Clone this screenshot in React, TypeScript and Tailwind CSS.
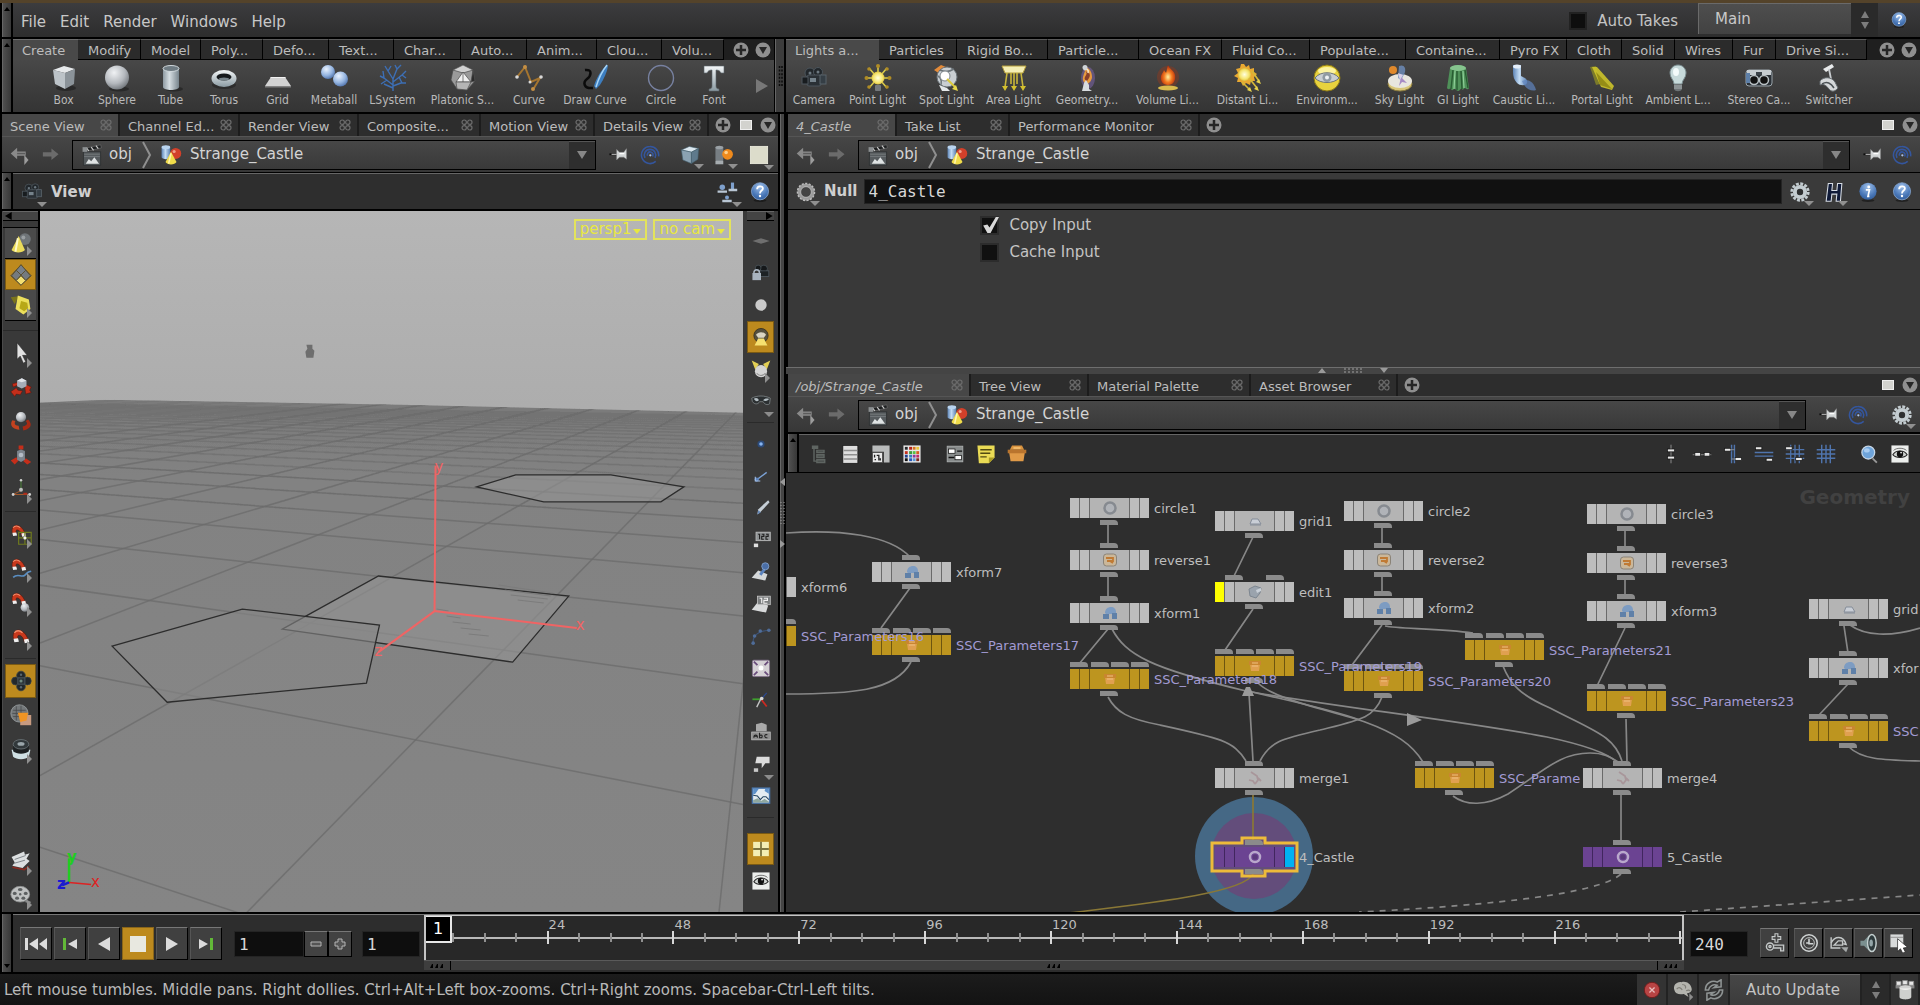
import React from "react";

/* ------------------------------------------------------------------ */
/* Shared gradients                                                    */
/* ------------------------------------------------------------------ */

function Defs() {
  return (
    <svg width="0" height="0" className="absolute" aria-hidden="true">
      <defs>
        <radialGradient id="gBall" cx="0.38" cy="0.3" r="0.75">
          <stop offset="0" stopColor="#f0f2f4" />
          <stop offset="0.6" stopColor="#b4b8bd" />
          <stop offset="1" stopColor="#6e7378" />
        </radialGradient>
        <radialGradient id="gBlueBall" cx="0.38" cy="0.3" r="0.75">
          <stop offset="0" stopColor="#eaf3ff" />
          <stop offset="0.6" stopColor="#94b4e0" />
          <stop offset="1" stopColor="#4c6fa8" />
        </radialGradient>
        <radialGradient id="gHelp" cx="0.5" cy="0.25" r="0.85">
          <stop offset="0" stopColor="#9fc0ea" />
          <stop offset="0.6" stopColor="#4a78b8" />
          <stop offset="1" stopColor="#2b5592" />
        </radialGradient>
        <radialGradient id="gSun" cx="0.5" cy="0.5" r="0.6">
          <stop offset="0" stopColor="#ffffe0" />
          <stop offset="0.6" stopColor="#f5e46c" />
          <stop offset="1" stopColor="#c9a520" />
        </radialGradient>
        <linearGradient id="gTube" x1="0" x2="1">
          <stop offset="0" stopColor="#8e9aa2" />
          <stop offset="0.4" stopColor="#d6dee2" />
          <stop offset="1" stopColor="#78858d" />
        </linearGradient>
        <linearGradient id="gBlueTube" x1="0" x2="1">
          <stop offset="0" stopColor="#5f86b8" />
          <stop offset="0.45" stopColor="#c3dcf4" />
          <stop offset="1" stopColor="#5b80b0" />
        </linearGradient>
        <linearGradient id="gSteel" x1="0" y1="0" x2="0" y2="1">
          <stop offset="0" stopColor="#f4f7f8" />
          <stop offset="1" stopColor="#8a9aa2" />
        </linearGradient>
        <radialGradient id="gFire" cx="0.5" cy="0.6" r="0.6">
          <stop offset="0" stopColor="#fff0a0" />
          <stop offset="0.45" stopColor="#f47a20" />
          <stop offset="1" stopColor="#a82008" />
        </radialGradient>
        <linearGradient id="gSky" x1="0" y1="0" x2="0" y2="1">
          <stop offset="0" stopColor="#b6b6b6" />
          <stop offset="0.28" stopColor="#adadad" />
          <stop offset="1" stopColor="#adadad" />
        </linearGradient>
        <linearGradient id="gGround" x1="0" y1="0" x2="0" y2="1">
          <stop offset="0" stopColor="#7c7c7c" />
          <stop offset="0.15" stopColor="#828282" />
          <stop offset="1" stopColor="#858585" />
        </linearGradient>
      </defs>
    </svg>
  );
}

/* ------------------------------------------------------------------ */
/* Icons, each drawn on a 28 x 28 grid                                 */
/* ------------------------------------------------------------------ */

const magnet = (
  <g>
    <path d="M3 13C1 5 7 1 12 4c4 2 6 6 8 11l-5 1c-1-4-3-7-5-7-2-1-3 1-2 4z" fill="#c9391d" stroke="#5b140a" strokeWidth="0.7" />
    <path d="M4 6c2-3 6-3 9 0" fill="none" stroke="#f08a68" strokeWidth="1.4" />
    <path d="M3 12.500l5-0.500 1 4-5 0.500zM14.500 13.500l5-1 1 4-5 1z" fill="#efefef" />
  </g>
);

const cameraShape = (
  <g>
    <circle cx="10" cy="9" r="5" fill="#22272b" stroke="#4c555c" />
    <circle cx="18" cy="8" r="4.500" fill="#22272b" stroke="#4c555c" />
    <rect x="7" y="11" width="14" height="11" rx="2" fill="#2a3035" stroke="#4c555c" />
    <rect x="2" y="13" width="6" height="7" fill="#181c1f" stroke="#4c555c" />
    <rect x="20" y="11" width="6" height="9" fill="#353e45" stroke="#59636b" />
    <path d="M10 14h6v4h-6z" fill="#76838c" />
    <circle cx="10" cy="9" r="1.500" fill="#6c7880" />
    <circle cx="18" cy="8" r="1.500" fill="#6c7880" />
  </g>
);

const fourWay = (
  <g fill="#c42e1a" stroke="#5a120a" strokeWidth="0.6">
    <path d="M1 20l7-5 2 3 6 1-3 5-5-1-2 3z" />
    <path d="M27 14l-6-3-2 4 1 8 7-2-2-3z" />
    <path d="M3 10l8-2-2 4-5 2z" />
  </g>
);

const ICONS: Record<string, React.ReactNode> = {
  box: (
    <g>
      <ellipse cx="16" cy="24" rx="10" ry="3" fill="#1c1c1c" opacity="0.6" />
      <path d="M3 6l11-4 11 3-10 4z" fill="#e6e9eb" />
      <path d="M3 6l12 3v16L5 20z" fill="#bcc3c8" />
      <path d="M15 9l10-4-1 15-9 5z" fill="#8b9399" />
    </g>
  ),
  sphere: (
    <g>
      <ellipse cx="16" cy="25" rx="10" ry="2.500" fill="#1c1c1c" opacity="0.6" />
      <circle cx="14" cy="13.500" r="12" fill="url(#gBall)" />
    </g>
  ),
  tube: (
    <g>
      <ellipse cx="17" cy="25" rx="9" ry="2.500" fill="#1c1c1c" opacity="0.6" />
      <path d="M6 4v19c0 4 16 4 16 0V4z" fill="url(#gTube)" />
      <ellipse cx="14" cy="4.500" rx="8" ry="3" fill="#6f7b82" stroke="#d0d8dc" />
    </g>
  ),
  torus: (
    <g>
      <ellipse cx="14" cy="21" rx="12" ry="4" fill="#1c1c1c" opacity="0.5" />
      <ellipse cx="14" cy="14.500" rx="12.500" ry="8.500" fill="url(#gSteel)" />
      <ellipse cx="14" cy="13" rx="7.500" ry="3.500" fill="#15191c" />
      <ellipse cx="14" cy="15" rx="5" ry="1.500" fill="#76838a" />
    </g>
  ),
  grid: (
    <g>
      <path d="M7 13h14l6 9H1z" fill="#d2d2d2" />
      <path d="M1 22h26v1.500H1z" fill="#818181" />
      <path d="M7 13h14l1 1H6z" fill="#f2f2f2" />
    </g>
  ),
  metaball: (
    <g>
      <circle cx="8" cy="8" r="7" fill="url(#gBlueBall)" />
      <circle cx="20.500" cy="15" r="7.500" fill="url(#gBlueBall)" />
    </g>
  ),
  lsystem: (
    <g fill="none" stroke="#3d6fb5" strokeWidth="1.400">
      <path d="M14 27V15M14 21L5 14M14 18l9-7M14 15l-5-8M14 15l4-10M5 14L1 12M5 14L4 7M9 7L6 2M9 7l3-5M18 5l-2-4M18 5l4-4M23 11l4-4M23 11l4 3M14 22l8-3M22 19l5 0M14 24l-9-4M20 13l3 6M8 16l-6 4" />
    </g>
  ),
  platonic: (
    <g stroke="#4a4a4a" strokeWidth="0.7">
      <path d="M14 1l10 5 2 11-8 9-10-1-6-9 2-10z" fill="#9a9a9a" />
      <path d="M14 1l10 5-10 3-10-3z" fill="#d0d0d0" />
      <path d="M14 8l8 10-15 0z" fill="#efefef" />
      <path d="M7 18h15l-4 8-10-1z" fill="#b5b5b5" />
      <path d="M22 18l2-12 2 11z" fill="#2b2b2b" />
      <path d="M14 8l0 10" />
    </g>
  ),
  curve: (
    <g>
      <path d="M2 13L10 3l6 15 9-4-6 10" fill="none" stroke="#a5752f" strokeWidth="2" />
      <g fill="#d8d8d8">
        <circle cx="2" cy="13" r="1.800" />
        <circle cx="26" cy="13" r="1.800" />
        <circle cx="15" cy="18" r="1.500" />
      </g>
      <circle cx="10" cy="3" r="2" fill="#c48f45" />
      <circle cx="18" cy="25" r="2" fill="#c48f45" />
    </g>
  ),
  drawcurve: (
    <g>
      <path d="M4 6c8-1 6 6 2 9s-4 10 6 9" fill="none" stroke="#0b0b0b" strokeWidth="2.500" />
      <path d="M26 1c-5 4-11 13-13 21l2 3 4-4c4-6 7-13 8-19z" fill="#3d7ec0" />
      <path d="M26 1c-4 5-8 12-11 22" fill="none" stroke="#a8d4f4" strokeWidth="1.500" />
    </g>
  ),
  circle: <circle cx="14" cy="14" r="12.500" fill="none" stroke="#7781a0" strokeWidth="1.400" />,
  font: (
    <g fill="url(#gSteel)" stroke="#5c666c" strokeWidth="0.6">
      <path d="M4 2h20v7h-3c-1-2-2-3-5-3v16c0 2 1 3 3 3v2H9v-2c2 0 3-1 3-3V6C9 6 8 7 7 9H4z" />
    </g>
  ),
  camera: cameraShape,
  pointlight: (
    <g>
      <g stroke="#d8c94a" strokeWidth="1.600">
        <path d="M14 1v8M14 14L2 14M14 14h12M5 4l6 7M23 4l-6 7M5 24l6-7M23 24l-6-7" />
      </g>
      <g fill="#b08c25">
        <circle cx="14" cy="2" r="2" />
        <circle cx="2.500" cy="14" r="2" />
        <circle cx="25.500" cy="14" r="2" />
        <circle cx="5" cy="5" r="1.800" />
        <circle cx="23" cy="5" r="1.800" />
        <circle cx="5" cy="23" r="1.800" />
        <circle cx="23" cy="23" r="1.800" />
      </g>
      <circle cx="14" cy="14" r="6.500" fill="url(#gSun)" />
      <rect x="11" y="21" width="6" height="6" rx="1" fill="#75797c" />
    </g>
  ),
  spotlight: (
    <g>
      <path d="M1 6l7-5 5 2-6 7z" fill="#e38b3a" />
      <circle cx="14" cy="13" r="10" fill="#c9ced2" stroke="#6c7479" />
      <path d="M7 6c4 2 9 2 14-1M5 12c4 2 4 8 2 10" stroke="#6c7479" fill="none" strokeWidth="1.500" />
      <circle cx="12" cy="12" r="5" fill="#fff" stroke="#7e868b" />
      <path d="M6 21l8 3 3 3H9z" fill="#e4e8ea" />
      <path d="M14 15l9 9" stroke="#d9c83c" strokeWidth="2" />
      <path d="M25 27l-6-2 4-4z" fill="#e7d84c" />
    </g>
  ),
  arealight: (
    <g>
      <path d="M2 2h24l-3 7H5z" fill="#f5efb5" stroke="#b59e3a" />
      <g stroke="#c7b53a" strokeWidth="1.600">
        <path d="M7 9L5 23M14 9v15M21 9l2 14M11 9v11M17 9v11" />
      </g>
      <path d="M2 22l6 0-3 5zM11 22h6l-3 5zM20 22h6l-3 5z" fill="#d4c02e" />
    </g>
  ),
  geolight: (
    <g>
      <ellipse cx="15" cy="14" rx="7" ry="11" fill="#8c6cc0" opacity="0.45" />
      <path d="M13 3c5 2 6 7 6 10s-3 7-5 7-5-3-4-7 2-5 3-10z" fill="#e79a3e" />
      <path d="M12 7c3 2 1 4 0 6s0 3 2 4c2-3 4-5 2-8z" fill="#8a3f2a" />
      <path d="M11 6c3-2 5 0 4 3" stroke="#f4e7cf" strokeWidth="1.500" fill="none" />
      <path d="M9 27l2-8 2-3 3 5v4l3 2z" fill="#d8dcdf" />
      <circle cx="12" cy="3.500" r="2.500" fill="#cfd4d8" />
    </g>
  ),
  volumelight: (
    <g>
      <ellipse cx="14" cy="13" rx="11" ry="11" fill="#8b3a20" opacity="0.5" />
      <ellipse cx="14" cy="24" rx="10" ry="2.500" fill="#d9bb4e" />
      <path d="M14 1c1 4 6 5 7 10 1 6-2 10-7 10s-8-4-7-9c1-3 2-3 3-6 1 2 2 2 2 3 1-3 1-5 2-8z" fill="url(#gFire)" />
    </g>
  ),
  distantlight: (
    <g>
      <path d="M10 0l2 3 3-2 1 4 4-1 0 4 3 2-3 3 1 4-4 0-1 4-4-2-3 3-2-4-4 0 1-4-4-2 4-3-2-4 4-1 1-4z" fill="#e9a932" />
      <circle cx="10.500" cy="10.500" r="6.500" fill="url(#gSun)" />
      <path d="M18 7l7 10M15 14l8 10M8 18l8 8" stroke="#d5b93a" strokeWidth="1.700" />
      <path d="M27 20l-5-2 3-3zM25 27l-5-2 3-3zM18 28l-5-2 3-3z" fill="#e6d24c" />
    </g>
  ),
  envlight: (
    <g>
      <circle cx="14" cy="14" r="13" fill="#e8d23e" stroke="#8a7716" />
      <ellipse cx="14" cy="7" rx="9" ry="4" fill="#fbf3a0" />
      <path d="M2 14c5-7 19-7 24 0-5 6-19 6-24 0z" fill="#c9ced2" stroke="#6c7378" />
      <circle cx="14" cy="13.500" r="4.500" fill="#8f9aa2" />
      <circle cx="14" cy="13.500" r="2" fill="#eef2f4" />
    </g>
  ),
  skylight: (
    <g>
      <ellipse cx="14" cy="20" rx="12" ry="7" fill="#d9c77a" stroke="#8a7a3c" />
      <ellipse cx="14" cy="17" rx="12" ry="7" fill="#e8e6df" />
      <path d="M13 2c5-2 7 2 6 6s-3 4-3 9l-4-3z" fill="#6f8fbd" opacity="0.8" />
      <circle cx="7" cy="6" r="4" fill="#e0892c" />
      <path d="M15 13l6 6-5-1-3 4z" fill="#a78bc4" />
      <path d="M12 9l5 2-3 5z" fill="#d8d0ea" />
    </g>
  ),
  gilight: (
    <g>
      <path d="M6 4c4-4 12-4 16 0l3 20c-2 3-3 0-4 0s-2 3-3 1-2 2-4 2-3-3-4-2-2 2-3 0-2 2-4-1z" fill="#4f9159" />
      <ellipse cx="14" cy="4" rx="8" ry="3" fill="#86c48e" />
      <path d="M9 6L7 25M13 7v19M17 7l1 18M21 6l3 18" stroke="#285c32" strokeWidth="1.400" />
      <path d="M11 7l-1 18M19 7l1 17" stroke="#8fd099" strokeWidth="1.200" />
    </g>
  ),
  causticlight: (
    <g>
      <path d="M3 1h8v11c4 2 7 3 6 7-1 3-7 3-10 0S3 12 3 8z" fill="url(#gBlueTube)" />
      <path d="M12 17c7-3 12 2 14 9-4 2-11-1-14-9z" fill="#5f84bf" opacity="0.7" />
      <ellipse cx="7" cy="2.500" rx="4" ry="2" fill="#e6effa" />
    </g>
  ),
  portallight: (
    <g>
      <path d="M2 3l6-1 4 18-4 1z" fill="#7b7a2a" />
      <path d="M4 3l5 0 17 19-2 4-11-3z" fill="#cdc42a" opacity="0.9" />
      <path d="M8 8l4 13 12 4z" fill="#958d16" />
    </g>
  ),
  ambientlight: (
    <g>
      <path d="M14 1c5 0 8 4 8 8 0 5-4 7-4 11h-8c0-4-4-6-4-11 0-4 3-8 8-8z" fill="#c6d9da" stroke="#7c8f92" />
      <ellipse cx="12" cy="8" rx="3" ry="4" fill="#f3fbfb" />
      <path d="M10 20h8v5c-1 3-7 3-8 0z" fill="#6e7477" />
      <path d="M10 22h8M10 24h8" stroke="#a9b0b3" />
    </g>
  ),
  stereocamera: (
    <g>
      <rect x="1" y="6" width="26" height="16" rx="3" fill="#2a3036" stroke="#9aa4aa" />
      <rect x="2" y="6" width="24" height="5" fill="#c6ccd0" />
      <circle cx="9" cy="16" r="4.500" fill="#111" stroke="#b8c0c4" strokeWidth="1.500" />
      <circle cx="19" cy="16" r="4.500" fill="#111" stroke="#b8c0c4" strokeWidth="1.500" />
      <path d="M1 9h4v10H1z" fill="#5d7fa8" />
      <rect x="11" y="8" width="6" height="3" fill="#3b4248" />
    </g>
  ),
  switcher: (
    <g>
      <path d="M8 5l9-5 2 3-8 5z" fill="#e8eaeb" />
      <path d="M14 5l2 10" stroke="#c8cccf" strokeWidth="1.800" />
      <path d="M5 17c4-5 12-4 15 1l3 6c-3 4-7 4-9 1-4-5-6-5-9-4z" fill="#d5d8da" stroke="#62686c" />
      <path d="M7 20c5-3 9-1 12 4" stroke="#4c5256" fill="none" strokeWidth="1.500" />
    </g>
  ),
  arrowleft: (
    <g>
      <path d="M1 12l9-8v5h12v6H10v5z" fill="#8a8a8a" />
      <path d="M10 11h11v2H10z" fill="#5c5c5c" />
      <path d="M20 14l6 7-6 7z" fill="#9c9c9c" />
    </g>
  ),
  arrowright: <path d="M26 13l-10-8v5H4v6h12v5z" fill="#6b6b6b" />,
  clapper: (
    <g>
      <path d="M3 6l22-5 1 4L4 10z" fill="#1d1f20" stroke="#777" strokeWidth="0.7" />
      <path d="M7 5l3 4M13 4l3 4M19 2l3 4" stroke="#c8c8c8" strokeWidth="1.500" />
      <rect x="3" y="10" width="22" height="17" fill="#565b5e" stroke="#2c2f31" />
      <path d="M4 13h20M4 16h20" stroke="#85898b" strokeWidth="0.8" />
      <path d="M6 25l4-6 3 3 4-5 6 8z" fill="#dfe3e4" />
      <rect x="2" y="4" width="6" height="6" fill="#8b8f91" />
    </g>
  ),
  geo: (
    <g>
      <path d="M2 4v13c0 3 11 3 11 0V4z" fill="url(#gBlueTube)" />
      <ellipse cx="7.500" cy="4" rx="5.500" ry="2.500" fill="#b9d4ef" />
      <circle cx="20" cy="12" r="7" fill="#d2402a" />
      <circle cx="18" cy="9.500" r="2" fill="#f0a08c" />
      <path d="M14 10l7 13c-2 4-12 4-14 0z" fill="#f0dc4a" />
      <path d="M14 12l-3 13" stroke="#fff6b0" strokeWidth="2" />
    </g>
  ),
  pin: (
    <g>
      <path d="M2 13h10" stroke="#0c0c0c" strokeWidth="2.500" />
      <path d="M5 13h8" stroke="#e0e0e0" strokeWidth="1.300" />
      <path d="M12 6l4 4h6l4-5v15l-4-3h-6l-4 4z" fill="#d3d6d7" stroke="#777" strokeWidth="0.6" />
      <path d="M16 11h7v2h-7z" fill="#fff" />
    </g>
  ),
  target: (
    <g fill="none" stroke="#34569e" strokeWidth="2.200">
      <path d="M14 2a12 12 0 1 0 8 21M14 2a12 12 0 0 1 12 14" />
      <path d="M7 18A8 8 0 1 1 21 18" />
      <path d="M10.500 15a4 4 0 1 1 7 1" />
      <circle cx="14.500" cy="14.500" r="1.600" fill="#a9c0ea" stroke="none" />
    </g>
  ),
  glasscube: (
    <g stroke="#45606f" strokeWidth="0.8">
      <path d="M2 7l11-5 13 3-10 5z" fill="#dbe7ef" />
      <path d="M2 7l14 3v16L4 21z" fill="#8ba2b2" />
      <path d="M16 10l10-5-1 15-9 6z" fill="#5f7a8c" />
    </g>
  ),
  cylball: (
    <g>
      <path d="M2 3v18c0 3 11 3 11 0V3z" fill="#777e83" />
      <ellipse cx="7.500" cy="3.500" rx="5.500" ry="2.500" fill="#9aa1a6" />
      <path d="M2 22h11v5H2z" fill="#a6acb0" />
      <circle cx="19" cy="13" r="7.500" fill="#ef8a1c" />
      <circle cx="17" cy="10.500" r="2.500" fill="#ffd08a" />
    </g>
  ),
  whitesquare: <rect x="3" y="3" width="22" height="22" fill="#dcdccb" stroke="#f2f2e4" />,
  gear: (
    <g>
      <circle cx="14" cy="14" r="11.500" fill="none" stroke="#c3ccd0" strokeWidth="4" strokeDasharray="4.010 2.010" />
      <circle cx="14" cy="14" r="7.200" fill="none" stroke="#c3ccd0" strokeWidth="5.500" />
      <circle cx="14" cy="14" r="4" fill="#2d2f30" />
    </g>
  ),
  ring: (
    <g>
      <circle cx="14" cy="14" r="9.500" fill="none" stroke="#9b9b9b" strokeWidth="5" />
      <circle cx="14" cy="14" r="12" fill="none" stroke="#bdbdbd" strokeWidth="2" strokeDasharray="3 2" />
      <circle cx="14" cy="14" r="7.500" fill="#444" stroke="#c9c9c9" />
    </g>
  ),
  hicon: (
    <g>
      <path d="M6 2h6l-1 10h7l1-10h6l-2 25h-6l1-10h-7l-1 10H3z" fill="#0f1a38" stroke="#d6dce4" strokeWidth="1.500" />
    </g>
  ),
  info: (
    <g>
      <ellipse cx="14" cy="26" rx="9" ry="2" fill="#111" opacity="0.6" />
      <circle cx="14" cy="13" r="12" fill="url(#gHelp)" />
      <circle cx="15" cy="7" r="2" fill="#fff" />
      <path d="M11 11h5l-2 9h2" stroke="#fff" strokeWidth="2.400" fill="none" />
    </g>
  ),
  help: (
    <g>
      <ellipse cx="14" cy="26" rx="9" ry="2" fill="#111" opacity="0.6" />
      <circle cx="14" cy="13" r="12" fill="url(#gHelp)" stroke="#8fb0da" />
      <path d="M10 10c0-5 8-5 8-1 0 3-4 3-4 7" stroke="#fff" strokeWidth="2.600" fill="none" />
      <circle cx="14" cy="19.500" r="1.700" fill="#fff" />
    </g>
  ),
  stamps: (
    <g>
      <g fill="#7ea0cc">
        <circle cx="8" cy="8" r="3.500" />
        <rect x="19" y="2" width="4" height="9" />
        <circle cx="14" cy="21" r="2.500" />
      </g>
      <g fill="#b9c6d4">
        <path d="M2 12h12v3H2zM16 10h11v3H16zM8 24h12v3H8z" />
      </g>
    </g>
  ),
  cone: (
    <g>
      <circle cx="19" cy="9" r="7.500" fill="#6f7478" />
      <circle cx="17" cy="7" r="2.500" fill="#9a9fa2" />
      <path d="M11 5l8 18c-3 4-14 4-17 0z" fill="#ebdb5a" />
      <path d="M10 8L7 25" stroke="#fffbc8" strokeWidth="2.500" />
    </g>
  ),
  diamond: (
    <g stroke="#5a5030" strokeWidth="1.200">
      <path d="M14 1l13 14-13 12L1 15z" fill="#8a8674" />
      <path d="M14 1l6 7-6 6-6-6z" fill="#77808a" />
      <path d="M8 8l6 6-6 7-6-6zM20 8l6 7-6 6-6-7z" fill="#747a80" />
      <path d="M14 15l6 6-6 6-6-6z" fill="#f2df72" />
    </g>
  ),
  dice: (
    <g>
      <path d="M1 4l10-1-5 10z" fill="#7a741c" />
      <path d="M10 2l14 5 2 12-9 7-10-7z" fill="#ecdf5c" />
      <path d="M14 9l8 2 1 7-5 4-6-4z" fill="#b8a818" />
    </g>
  ),
  cursor: <path d="M9 1l13 16-6 0 4 8-3 2-4-9-4 4z" fill="#e2e2e2" stroke="#2a2a2a" strokeWidth="0.8" />,
  move: (
    <g>
      {fourWay}
      <path d="M9 6l6-3 6 3v7l-6 3-6-3z" fill="#a5adb8" />
      <path d="M9 6l6 2 6-2-6-3z" fill="#dfe3e8" />
    </g>
  ),
  rotate: (
    <g>
      <path d="M3 13c-4 6 0 12 9 12l-1-5c-5 0-6-3-4-6z" fill="#c3421f" />
      <path d="M23 12c6 6 4 12-6 14l-1-5c6-1 7-4 4-7z" fill="#a82a14" />
      <circle cx="14" cy="9" r="6.500" fill="url(#gBall)" />
    </g>
  ),
  scale: (
    <g>
      <path d="M11 2h6v5h-6zM1 21l7-4 3 4-5 5zM27 23l-7-5-3 4 5 4z" fill="#c42e1a" />
      <path d="M9 9l5-2 5 2v11l-5 3-5-3z" fill="#7d858e" />
      <circle cx="14" cy="14" r="3" fill="#b4bcc6" />
    </g>
  ),
  axes: (
    <g>
      <path d="M14 2v14" stroke="#4f8a3c" strokeWidth="1.200" />
      <path d="M14 16L4 21h20" stroke="#a85a2c" strokeWidth="1.200" fill="none" />
      <circle cx="14" cy="3" r="1.600" fill="#cfcfcf" />
      <circle cx="14" cy="15" r="2.500" fill="#bdbdbd" />
      <circle cx="4" cy="21" r="1.800" fill="#cfcfcf" />
      <circle cx="25" cy="21" r="1.800" fill="#cfcfcf" />
      <path d="M17 20h5" stroke="#b12a1a" strokeWidth="2.500" />
    </g>
  ),
  magnetgrid: (
    <g>
      {magnet}
      <path d="M11 12h16v15H11zM19 12v15M11 19h16" stroke="#6f7a1e" fill="none" strokeWidth="1.500" />
      <circle cx="19" cy="19" r="2" fill="#f2f2f2" />
    </g>
  ),
  magnetcurve: (
    <g>
      {magnet}
      <path d="M4 26c6-6 11 1 15-3s4-4 8-5" stroke="#5a8ec2" fill="none" strokeWidth="2" />
    </g>
  ),
  magnetpoint: (
    <g>
      {magnet}
      <circle cx="19" cy="21" r="5.500" fill="url(#gBall)" />
    </g>
  ),
  magnet: <g transform="translate(1 3) scale(1.150)">{magnet}</g>,
  viewtool: (
    <g>
      <circle cx="14" cy="7" r="5.500" fill="#23282b" stroke="#3a4349" />
      <circle cx="7" cy="14" r="5" fill="#23282b" stroke="#3a4349" />
      <circle cx="22" cy="14" r="5" fill="#23282b" stroke="#3a4349" />
      <circle cx="14" cy="21" r="5.500" fill="#23282b" stroke="#3a4349" />
      <rect x="10" y="10" width="9" height="8" fill="#2c3439" stroke="#55616a" />
      <circle cx="14" cy="14" r="2" fill="#6f8a80" />
      <circle cx="14" cy="6" r="1.500" fill="#59656d" />
      <circle cx="14" cy="22" r="1.500" fill="#59656d" />
    </g>
  ),
  flipbook: (
    <g>
      <circle cx="12" cy="12" r="11" fill="#74787a" stroke="#9aa0a2" />
      <path d="M4 8h16M3 12h18M4 16h16M8 3v18M14 2v20" stroke="#46494b" strokeWidth="1" />
      <rect x="13" y="14" width="14" height="13" fill="#c79a80" />
      <path d="M10 11h13l-2 10-8 2z" fill="#ef9424" />
    </g>
  ),
  lens: (
    <g>
      <path d="M2 15h24l-2 9c-4 4-16 4-20 0z" fill="#cfe0e4" />
      <path d="M4 9h20v8c-4 4-16 4-20 0z" fill="#1d2123" />
      <ellipse cx="14" cy="8" rx="10" ry="6" fill="#31383b" stroke="#6f787c" />
      <ellipse cx="14" cy="7.500" rx="4.500" ry="2.500" fill="#9aa6ab" />
    </g>
  ),
  stack: (
    <g>
      <path d="M3 22l15 3 6-4" stroke="#8a2a20" strokeWidth="2" fill="none" />
      <path d="M2 9l16-7 1 4 6-2-4 7 4 3-9 9-13-3 3-4z" fill="#dcdfe0" />
      <path d="M6 12l14-5M5 17l14-4" stroke="#7b8286" strokeWidth="1.200" />
    </g>
  ),
  reel: (
    <g>
      <ellipse cx="13" cy="13" rx="12" ry="10" fill="#bfc1c1" stroke="#8b8d8d" />
      <g fill="#5c5f60">
        <ellipse cx="13" cy="7" rx="3" ry="2" />
        <ellipse cx="6" cy="12" rx="2.500" ry="2" />
        <ellipse cx="20" cy="12" rx="2.500" ry="2" />
        <ellipse cx="9" cy="18" rx="2.500" ry="2" />
        <ellipse cx="17" cy="18" rx="2.500" ry="2" />
      </g>
      <circle cx="13" cy="13" r="1.500" fill="#5c5f60" />
      <path d="M21 20l6 3-2 2-6-2z" fill="#8b8d8d" />
    </g>
  ),
  flatdiamond: <path d="M2 14l12-4 12 4-12 4z" fill="#6f6f6f" />,
  camlock: (
    <g>
      <circle cx="18" cy="8" r="5" fill="#15181a" stroke="#4e575d" />
      <circle cx="10" cy="7" r="4" fill="#15181a" stroke="#4e575d" />
      <rect x="11" y="11" width="14" height="8" fill="#1d2225" stroke="#56606a" />
      <rect x="2" y="14" width="12" height="10" fill="#a9b4c0" />
      <path d="M4 14c0-6 8-6 8 0" stroke="#a9b4c0" fill="none" strokeWidth="2" />
    </g>
  ),
  disc: <circle cx="14" cy="14" r="8" fill="#cacaca" />,
  headlight: (
    <g>
      <circle cx="14" cy="12" r="10" fill="#55503e" stroke="#2c281c" />
      <path d="M7 11c3-5 11-5 14 0l-3 4h-8z" fill="#d9d4c2" />
      <path d="M10 16h8l5 10H5z" fill="#f6e070" />
    </g>
  ),
  lights: (
    <g>
      <path d="M1 2l10 5-5 8zM27 2L17 7l5 8z" fill="#e2cf54" />
      <circle cx="14" cy="17" r="8.500" fill="#d4d4d4" />
      <path d="M8 20c3 4 9 4 12 0" stroke="#8d8d8d" fill="none" strokeWidth="1.500" />
    </g>
  ),
  goggles: (
    <g>
      <path d="M1 10c8-4 18-4 26 0l-1 8c-3 2-7 1-9-3h-5c-2 4-7 4-10 0z" fill="#2b2f31" stroke="#888f93" />
      <path d="M4 11c3-2 6-1 7 2-2 2-5 2-7-2zM17 13c2-3 5-3 8-2 0 3-6 4-8 2z" fill="#b5bfc4" />
    </g>
  ),
  bluedot: (
    <g>
      <circle cx="14" cy="14" r="5" fill="#2c4a78" />
      <circle cx="14" cy="14" r="2.500" fill="#87b4f0" />
    </g>
  ),
  dumbbell: (
    <g>
      <path d="M7 20L22 9" stroke="#7ba1d4" strokeWidth="2" />
      <circle cx="8" cy="19" r="3" fill="#5c83bd" />
      <path d="M6 15v6h7" fill="none" stroke="#a7c2e6" strokeWidth="1.500" />
    </g>
  ),
  brush: (
    <g>
      <path d="M24 3l2 3L14 19l-5 4 1-7z" fill="#c5ced6" />
      <path d="M9 23l1-6 4 3z" fill="#6687b5" />
    </g>
  ),
  pointnum: (
    <g>
      <rect x="7" y="3" width="20" height="12" fill="#8d9193" stroke="#c8c8c8" />
      <path d="M10 6h2v7M15 6h3v3h-3v4h3M21 6h3v3h-3v4h3" stroke="#222" fill="none" strokeWidth="1.600" />
      <rect x="4" y="19" width="6" height="5" fill="#e0e0e0" />
    </g>
  ),
  primnormal: (
    <g>
      <path d="M1 22l9-10 13 5-3 9z" fill="#d5d8da" />
      <path d="M13 18l6-8" stroke="#5a82bd" strokeWidth="4" />
      <circle cx="20" cy="6" r="5" fill="#4a6ea6" stroke="#8fb0dc" />
    </g>
  ),
  primnum: (
    <g>
      <path d="M1 22l9-11 14 5-3 10z" fill="#d8dadb" />
      <rect x="9" y="3" width="18" height="12" fill="#7c7f80" stroke="#cfcfcf" />
      <path d="M12 6h3v7M18 6h5v3h-5v4h5" stroke="#f0f0f0" fill="none" strokeWidth="1.600" />
    </g>
  ),
  hull: (
    <g>
      <path d="M3 25c-1-12 7-18 22-19" fill="none" stroke="#3d5478" strokeWidth="1.600" />
      <g fill="#4f6c98">
        <circle cx="3" cy="24" r="2.500" />
        <circle cx="5" cy="14" r="2.500" />
        <circle cx="13" cy="7" r="2.500" />
        <circle cx="25" cy="6" r="2.500" />
      </g>
    </g>
  ),
  uv: (
    <g>
      <rect x="2" y="3" width="24" height="23" rx="2" fill="#d4d0d4" stroke="#84708e" />
      <path d="M4 5l5 5M24 5l-5 5M4 24l5-5M24 24l-5-5" stroke="#6a4c7c" strokeWidth="2.500" />
      <circle cx="14" cy="14" r="3.500" fill="#fff" />
    </g>
  ),
  xyz: (
    <g>
      <path d="M14 13H2" stroke="#3fa02e" strokeWidth="2.500" />
      <path d="M15 14l7 9" stroke="#cc2a22" strokeWidth="2.500" />
      <path d="M14 13l8-9" stroke="#2c4a90" strokeWidth="1.800" />
      <path d="M15 10l-7 14" stroke="#c6c6c6" strokeWidth="1.800" />
      <circle cx="15" cy="12" r="2.500" fill="#d8d8d8" />
    </g>
  ),
  abc: (
    <g>
      <path d="M7 3l8-2 7 3v9H7z" fill="#a9a9a9" />
      <rect x="1" y="14" width="26" height="11" fill="#8e8e8e" stroke="#c4c4c4" />
      <path d="M4 22c0-5 5-5 5 0M4 20h5M12 15v7h3c2-4-1-4-3-3M23 18c-5-2-5 5 0 4" stroke="#222" fill="none" strokeWidth="1.500" />
    </g>
  ),
  marker: (
    <g>
      <path d="M8 4h18v9h-6l-5 7v-7H6z" fill="#dcdcdc" />
      <rect x="4" y="20" width="6" height="5" fill="#c8c8c8" />
    </g>
  ),
  picture: (
    <g>
      <rect x="2" y="3" width="24" height="21" fill="#e4ecf2" stroke="#4a76ac" strokeWidth="2" />
      <path d="M3 4h8l-5 7-3 1zM20 4h5v7l-6-4z" fill="#5b8fc8" />
      <path d="M3 20l6-3 5 4 5-3 6 4v1H3z" fill="#8fa79e" />
      <path d="M3 13l6 1 4 5 4-4 4 0 4 4" stroke="#24445f" fill="none" strokeWidth="1.600" />
    </g>
  ),
  quad: (
    <g>
      <rect x="3" y="4" width="22" height="20" fill="#f4eeb4" />
      <path d="M14 4v20M3 14h22" stroke="#7c7440" strokeWidth="2.500" />
    </g>
  ),
  eye: (
    <g>
      <rect x="2" y="2" width="24" height="24" fill="#eceeec" />
      <path d="M4 15c4-7 16-7 20 0-4 5-16 5-20 0z" fill="#cfd3d0" stroke="#222" strokeWidth="1.500" />
      <circle cx="14" cy="14" r="4.500" fill="#111" />
      <circle cx="15.500" cy="12" r="1.200" fill="#fff" />
      <path d="M5 9c4-4 14-4 18 0" stroke="#444" fill="none" />
    </g>
  ),
  tree: (
    <g fill="#5f6562">
      <path d="M4 2h9v5H4zM10 8h12v5H10zM10 14h12v6H10zM10 21h13v6H10z" />
      <path d="M7 7v17h4" stroke="#5f6562" strokeWidth="2" fill="none" />
      <path d="M12 10h8M12 17h8M12 24h9" stroke="#3f4442" strokeWidth="1.200" />
    </g>
  ),
  list: (
    <g>
      <rect x="4" y="2" width="21" height="25" fill="#dedede" stroke="#111" />
      <path d="M5 9h19M5 15h19M5 21h19" stroke="#8f8f8f" strokeWidth="2" />
    </g>
  ),
  layers: (
    <g>
      <path d="M2 2h24v24h-8V11H2z" fill="#b9bbbb" />
      <rect x="2" y="12" width="14" height="14" fill="#e8e8e8" stroke="#444" />
      <path d="M5 15v4M8 16h3v7M13 20v3M5 22h2" stroke="#222" strokeWidth="1.800" fill="none" />
    </g>
  ),
  palette: (
    <g>
      <rect x="2" y="2" width="24" height="24" fill="#e8e8e8" />
      <g>
        <path d="M4 4h4v4H4z" fill="#26282a" />
        <path d="M10 4h4v4h-4z" fill="#b3241a" />
        <path d="M15 4h4v4h-4z" fill="#d8741e" />
        <path d="M20 4h4v4h-4z" fill="#e8c43a" />
        <path d="M4 10h4v4H4z" fill="#c4311f" />
        <path d="M10 10h4v4h-4z" fill="#3e9a3a" />
        <path d="M15 10h4v4h-4z" fill="#55c046" />
        <path d="M20 10h4v4h-4z" fill="#d65c1e" />
        <path d="M4 15h4v4H4z" fill="#1f3f90" />
        <path d="M10 15h4v4h-4z" fill="#2f7fc0" />
        <path d="M15 15h4v4h-4z" fill="#8a3a9a" />
        <path d="M20 15h4v4h-4z" fill="#c02a6a" />
        <path d="M4 20h4v4H4z" fill="#101010" />
        <path d="M10 20h4v4h-4z" fill="#2a58b8" />
        <path d="M15 20h4v4h-4z" fill="#5a9ad8" />
        <path d="M20 20h4v4h-4z" fill="#7a2a20" />
      </g>
    </g>
  ),
  netbox: (
    <g>
      <rect x="3" y="3" width="22" height="22" fill="#888c8c" stroke="#b5b8b8" />
      <rect x="5" y="7" width="9" height="6" fill="#fff" stroke="#111" />
      <rect x="14" y="16" width="9" height="6" fill="#fff" stroke="#111" />
      <path d="M5 19h8M17 10h7" stroke="#111" strokeWidth="2" />
    </g>
  ),
  note: (
    <g>
      <path d="M2 2h24v17l-8 8H4z" fill="#eadb55" />
      <path d="M18 27v-8h8z" fill="#a89a24" />
      <path d="M6 8h16M6 13h14M6 18h9" stroke="#504a12" strokeWidth="2" />
    </g>
  ),
  basket: (
    <g>
      <path d="M3 12h22l-2 12H5z" fill="#e09a48" />
      <path d="M1 8h26v5H1z" fill="#b9742e" />
      <path d="M7 2h14l3 6H4z" fill="#d8923e" />
      <path d="M9 4h10v3H9z" fill="#f0b868" />
    </g>
  ),
  alignv: (
    <g>
      <path d="M14 1v26" stroke="#8a8a8a" strokeWidth="1.400" />
      <rect x="9" y="7" width="10" height="4" fill="#e8e8e8" stroke="#111" />
      <rect x="9" y="17" width="10" height="4" fill="#e8e8e8" stroke="#111" />
    </g>
  ),
  alignh: (
    <g>
      <path d="M1 15h26" stroke="#8a8a8a" strokeWidth="1.400" />
      <rect x="4" y="12" width="8" height="5" fill="#e8e8e8" stroke="#111" />
      <rect x="17" y="12" width="8" height="5" fill="#e8e8e8" stroke="#111" />
    </g>
  ),
  snapv: (
    <g>
      <path d="M12 1v26M16 1v26" stroke="#4f74ad" strokeWidth="2" />
      <rect x="2" y="6" width="9" height="4" fill="#e8e8e8" stroke="#111" />
      <rect x="17" y="19" width="9" height="4" fill="#e8e8e8" stroke="#111" />
      <path d="M10 8h6M12 21h6" stroke="#aaa" />
    </g>
  ),
  snaph: (
    <g>
      <path d="M1 12h26M1 17h26" stroke="#4f74ad" strokeWidth="2" />
      <rect x="2" y="4" width="9" height="4" fill="#e8e8e8" stroke="#111" />
      <rect x="17" y="20" width="9" height="4" fill="#e8e8e8" stroke="#111" />
    </g>
  ),
  snapgrid: (
    <g>
      <path d="M1 8h26M1 14h26M1 20h26M8 1v26M14 1v26M20 1v26" stroke="#4f74ad" strokeWidth="1.800" />
      <rect x="1" y="4" width="9" height="4" fill="#e8e8e8" stroke="#111" />
      <rect x="15" y="19" width="9" height="4" fill="#e8e8e8" stroke="#111" />
    </g>
  ),
  gridblue: <path d="M1 8h26M1 14h26M1 20h26M8 1v26M14 1v26M20 1v26" stroke="#4f74ad" strokeWidth="2" />,
  search: (
    <g>
      <path d="M19 20l6 6" stroke="#9a9a9a" strokeWidth="2.500" />
      <circle cx="13" cy="12" r="9" fill="#6fa4da" stroke="#c6d6e6" strokeWidth="1.800" />
      <ellipse cx="11" cy="9" rx="4" ry="3" fill="#a9cdf2" />
    </g>
  ),
  key: (
    <g fill="none" stroke="#c4c8c8" strokeWidth="2">
      <circle cx="7" cy="19" r="5" />
      <circle cx="7" cy="19" r="1.500" />
      <path d="M12 17h14v8h-4v-4H12" />
      <path d="M14 1h4v4h4v4h-4v4h-4V9h-4V5h4z" strokeWidth="1.600" />
    </g>
  ),
  clock: (
    <g fill="none" stroke="#d0d4d4" strokeWidth="2.200">
      <circle cx="14" cy="14" r="11.500" />
      <circle cx="14" cy="14" r="7.500" strokeWidth="1.200" />
      <path d="M14 8v7h6M10 14h4" />
    </g>
  ),
  sweep: (
    <g fill="none" stroke="#c4c8c8" strokeWidth="2">
      <path d="M3 6v15h13" />
      <path d="M3 14C8 4 20 3 24 16l-4-1" />
      <path d="M7 17l6-6h6v6z" />
      <path d="M17 20h10l-3 7z" fill="#a5a9a9" stroke="none" />
    </g>
  ),
  speaker: (
    <g>
      <path d="M2 11h5l7-8v22l-7-7H2z" fill="#7b9090" />
      <ellipse cx="18" cy="14" rx="6" ry="12" fill="#2e3a3c" stroke="#c4d0d0" strokeWidth="2" />
      <ellipse cx="17" cy="14" rx="2.500" ry="5" fill="#93a5a8" />
    </g>
  ),
  pointer: (
    <g>
      <rect x="2" y="2" width="18" height="18" fill="#d8dada" />
      <path d="M2 6h18" stroke="#777" />
      <path d="M12 8l14 12-6 1 3 6-4 1-3-6-4 4z" fill="#fff" stroke="#222" />
    </g>
  ),
  errorx: (
    <g>
      <circle cx="14" cy="14" r="12" fill="#b84444" stroke="#6d1c1c" strokeWidth="1.500" />
      <path d="M10 10l8 8M18 10l-8 8" stroke="#e8bcbc" strokeWidth="2" />
    </g>
  ),
  brain: (
    <g>
      <path d="M3 14c-2-6 3-11 9-10 6-2 12 2 13 8 1 4-3 6-6 6l2 5-6-4c-6 1-11 0-12-5z" fill="#b4b4ae" />
      <path d="M6 13c3-4 6-1 7 1M13 7c4 0 5 3 4 5M18 15c2-1 4-1 5 0" stroke="#807f78" fill="none" strokeWidth="1.500" />
      <path d="M22 18l5 5-5 5z" fill="#8c8c8c" />
    </g>
  ),
  recook: (
    <g fill="none" stroke="#8f9494" strokeWidth="2">
      <path d="M3 14C3 5 12 1 18 4l5-3v9l-9 1 4-3c-5-2-10 1-11 6z" />
      <path d="M25 14c0 9-9 13-15 10l-5 3v-9l9-1-4 3c5 2 10-1 11-6z" />
    </g>
  ),
  drum: (
    <g>
      <path d="M3 3h6v5H3zM11 2h6v5h-6zM19 3h6v5h-6z" fill="#e6e6e6" stroke="#888" />
      <path d="M7 11c0-3 15-3 15 0v12c0 4-15 4-15 0z" fill="#cfd0ce" />
      <ellipse cx="14.500" cy="11" rx="7.500" ry="3" fill="#f2f2f0" />
      <path d="M2 8h24v4H2z" fill="#bdbdbd" opacity="0.6" />
    </g>
  ),
};

function Icon({ name, className }: { name: string; className?: string }) {
  return (
    <svg viewBox="0 0 28 28" className={className ?? "size-6"} aria-hidden="true">
      {ICONS[name]}
    </svg>
  );
}

/* ------------------------------------------------------------------ */
/* Small pieces                                                        */
/* ------------------------------------------------------------------ */

function Grip({ down }: { down?: boolean }) {
  return (
    <div
      className={
        "flex w-[9px] shrink-0 flex-col items-center border-l border-[#666] bg-gradient-to-r from-[#505050] to-[#383838] py-1 " +
        (down ? "justify-end" : "justify-start")
      }
    >
      <svg viewBox="0 0 6 4" className="h-1 w-1.5" aria-hidden="true">
        <path d={down ? "M0 0h6L3 4z" : "M0 4h6L3 0z"} fill="#000" />
      </svg>
    </div>
  );
}

function RoundButton({ kind }: { kind: "plus" | "down" }) {
  return (
    <button type="button" aria-label={kind === "plus" ? "Add tab" : "Tab menu"} className="flex size-4 shrink-0">
      <svg viewBox="0 0 16 16" className="size-4" aria-hidden="true">
        <circle cx="8" cy="8" r="7.500" fill="#8f8f8f" />
        {kind === "plus" ? (
          <path d="M8 3v10M3 8h10" stroke="#262626" strokeWidth="2.500" />
        ) : (
          <path d="M4 5h8l-4 7z" fill="#262626" />
        )}
      </svg>
    </button>
  );
}

function CloseMark() {
  return (
    <svg viewBox="0 0 12 12" className="size-3 shrink-0" aria-hidden="true">
      <g fill="none" stroke="#6c6c6c" strokeWidth="1.200">
        <circle cx="3.200" cy="3.200" r="2.200" />
        <circle cx="8.800" cy="3.200" r="2.200" />
        <circle cx="3.200" cy="8.800" r="2.200" />
        <circle cx="8.800" cy="8.800" r="2.200" />
      </g>
    </svg>
  );
}

function MaxSquare() {
  return (
    <button type="button" aria-label="Maximize pane" className="flex h-[10px] w-3 shrink-0 border border-[#eee] bg-[#d2d2ce]" />
  );
}

function Tri({ side }: { side: "right" | "down" }) {
  return (
    <svg
      viewBox="0 0 8 8"
      className={side === "right" ? "absolute right-1 bottom-0.5 h-2.5 w-[5px]" : "absolute -right-1 -bottom-1 h-[5px] w-2.5"}
      preserveAspectRatio="none"
      aria-hidden="true"
    >
      <path d={side === "right" ? "M0 0l8 4-8 4z" : "M0 0h8L4 8z"} fill="#909090" />
    </svg>
  );
}

function IconButton({ name, label, menu, size }: { name: string; label: string; menu?: boolean; size?: string }) {
  return (
    <button type="button" aria-label={label} className="relative flex shrink-0 items-center justify-center">
      <Icon name={name} className={size ?? "size-5"} />
      {menu && <Tri side="down" />}
    </button>
  );
}

/* ------------------------------------------------------------------ */
/* Menu bar                                                            */
/* ------------------------------------------------------------------ */

function Spinner() {
  return (
    <svg viewBox="0 0 8 18" className="h-[18px] w-2" aria-hidden="true">
      <path d="M0 7h8L4 0zM0 11h8l-4 7z" fill="#7d7d7d" />
    </svg>
  );
}

function MenuBar() {
  return (
    <header className="flex h-[34px] shrink-0 gap-0.5 pl-0.5">
      <Grip />
      <div className="flex min-w-0 flex-1 items-stretch bg-gradient-to-b from-[#3c3c3e] to-[#2d2d2d]">
        <nav className="flex items-center gap-3.5 pt-1 pl-2 text-[15px] text-[#c8c8c8]">
          {["File", "Edit", "Render", "Windows", "Help"].map((m) => (
            <button key={m} type="button">
              {m}
            </button>
          ))}
        </nav>
        <label className="mr-5 ml-auto flex items-center gap-2.5 pt-0.5 text-[15px] text-[#c4c4c4]">
          <input type="checkbox" className="size-[18px] appearance-none border-2 border-[#222] bg-[#0e0e0e]" />
          Auto Takes
        </label>
        <select
          aria-label="Take"
          className="mb-[3px] w-[153px] appearance-none border-t border-l border-[#6a6a6a] bg-gradient-to-b from-[#4e4e4e] to-[#424242] pl-4 text-[15px] text-[#c8c8c8]"
        >
          <option>Main</option>
        </select>
        <div className="flex w-[27px] items-center justify-center bg-[#2a2a2a]">
          <Spinner />
        </div>
        <div className="flex w-[42px] items-center justify-center">
          <IconButton name="help" label="Help" size="size-4" />
        </div>
      </div>
    </header>
  );
}

/* ------------------------------------------------------------------ */
/* Shelves                                                             */
/* ------------------------------------------------------------------ */

type ShelfTab = [string, string];
type ShelfTool = [string, string, string];

const LEFT_TABS: ShelfTab[] = [
  ["Create", "w-[65px]"],
  ["Modify", "w-[63px]"],
  ["Model", "w-[60px]"],
  ["Poly...", "w-[62px]"],
  ["Defo...", "w-[66px]"],
  ["Text...", "w-[65px]"],
  ["Char...", "w-[67px]"],
  ["Auto...", "w-[66px]"],
  ["Anim...", "w-[70px]"],
  ["Clou...", "w-[65px]"],
  ["Volu...", "w-[62px]"],
];

const RIGHT_TABS: ShelfTab[] = [
  ["Lights a...", "w-[93px]"],
  ["Particles", "w-[78px]"],
  ["Rigid Bo...", "w-[91px]"],
  ["Particle...", "w-[91px]"],
  ["Ocean FX", "w-[83px]"],
  ["Fluid Co...", "w-[88px]"],
  ["Populate...", "w-[96px]"],
  ["Containe...", "w-[94px]"],
  ["Pyro FX", "w-[67px]"],
  ["Cloth", "w-[55px]"],
  ["Solid", "w-[53px]"],
  ["Wires", "w-[58px]"],
  ["Fur", "w-[43px]"],
  ["Drive Si...", "w-[91px]"],
];

const LEFT_TOOLS: ShelfTool[] = [
  ["box", "Box", "w-[53px]"],
  ["sphere", "Sphere", "w-[54px]"],
  ["tube", "Tube", "w-[53px]"],
  ["torus", "Torus", "w-[54px]"],
  ["grid", "Grid", "w-[53px]"],
  ["metaball", "Metaball", "w-[60px]"],
  ["lsystem", "LSystem", "w-[57px]"],
  ["platonic", "Platonic S...", "w-[83px]"],
  ["curve", "Curve", "w-[50px]"],
  ["drawcurve", "Draw Curve", "w-[82px]"],
  ["circle", "Circle", "w-[50px]"],
  ["font", "Font", "w-[56px]"],
];

const RIGHT_TOOLS: ShelfTool[] = [
  ["camera", "Camera", "w-[54px]"],
  ["pointlight", "Point Light", "w-[73px]"],
  ["spotlight", "Spot Light", "w-[65px]"],
  ["arealight", "Area Light", "w-[69px]"],
  ["geolight", "Geometry...", "w-[78px]"],
  ["volumelight", "Volume Li...", "w-[83px]"],
  ["distantlight", "Distant Li...", "w-[77px]"],
  ["envlight", "Environm...", "w-[82px]"],
  ["skylight", "Sky Light", "w-[63px]"],
  ["gilight", "GI Light", "w-[54px]"],
  ["causticlight", "Caustic Li...", "w-[78px]"],
  ["portallight", "Portal Light", "w-[78px]"],
  ["ambientlight", "Ambient L...", "w-[74px]"],
  ["stereocamera", "Stereo Ca...", "w-[88px]"],
  ["switcher", "Switcher", "w-[52px]"],
];

function Shelf({ tabs, tools, indent, more }: { tabs: ShelfTab[]; tools: ShelfTool[]; indent: string; more?: boolean }) {
  return (
    <div className="flex min-w-0 flex-1 flex-col overflow-hidden">
      <div className="flex h-[21px] shrink-0 bg-[#1f1f1f]" role="tablist">
        {tabs.map(([name, w], i) => (
          <button
            key={name}
            type="button"
            role="tab"
            aria-selected={i === 0}
            className={
              "shrink-0 border-t text-left text-[13px] leading-[21px] whitespace-nowrap text-[#bdbdbd] " +
              w +
              (i === 0
                ? " border-[#6e6e6e] bg-[#494949] pl-[9px]"
                : " border-r border-b border-t-[#5a5a5a] border-r-black border-b-black bg-[#2b2b2b] pl-2.5")
            }
          >
            {name}
          </button>
        ))}
        <div className="mr-[3px] ml-auto flex items-center gap-1.5">
          <RoundButton kind="plus" />
          <RoundButton kind="down" />
        </div>
      </div>
      <div className={"flex min-h-0 flex-1 items-stretch bg-gradient-to-b from-[#484848] to-[#343434] " + indent}>
        {tools.map(([icon, name, w]) => (
          <button key={name} type="button" className={"flex shrink-0 flex-col items-center pt-1 " + w}>
            <Icon name={icon} className="size-7" />
            <span className="font-['DejaVu_Sans_Condensed','DejaVu_Sans',sans-serif] text-xs leading-[17px] whitespace-nowrap text-[#b9b9b9]">
              {name}
            </span>
          </button>
        ))}
        {more && (
          <button type="button" aria-label="More tools" className="mr-1.5 ml-auto flex items-center">
            <svg viewBox="0 0 12 14" className="h-3.5 w-3" aria-hidden="true">
              <path d="M0 0l12 7-12 7z" fill="#787878" />
            </svg>
          </button>
        )}
      </div>
    </div>
  );
}

function Shelves() {
  return (
    <div className="mt-0.5 grid h-[73px] shrink-0 grid-cols-[773fr_9px_1136fr] pl-0.5">
      <div className="flex min-w-0 gap-0.5 pr-px">
        <Grip />
        <Shelf tabs={LEFT_TABS} tools={LEFT_TOOLS} indent="pl-6" more />
      </div>
      <div className="flex items-center justify-center border-l border-[#666] bg-[#3c3c3c]">
        <svg viewBox="0 0 5 20" className="h-5 w-[5px]" aria-hidden="true">
          <path d="M1.500 0v20M4 0v20" stroke="#0a0a0a" strokeWidth="1.500" strokeDasharray="2 1.600" />
        </svg>
      </div>
      <div className="flex min-w-0 pl-0.5">
        <Shelf tabs={RIGHT_TABS} tools={RIGHT_TOOLS} indent="pl-px" />
      </div>
    </div>
  );
}

/* ------------------------------------------------------------------ */
/* Pane headers                                                        */
/* ------------------------------------------------------------------ */

function PaneTabs({ tabs, italicFirst }: { tabs: ShelfTab[]; italicFirst?: boolean }) {
  return (
    <div className="flex h-[22px] shrink-0 bg-[#2d2d2d]" role="tablist">
      {tabs.map(([name, w], i) => (
        <button
          key={name}
          type="button"
          role="tab"
          aria-selected={i === 0}
          className={
            "flex shrink-0 items-center justify-between border-r-2 border-[#1c1c1c] pr-1.5 pl-2 text-[13px] whitespace-nowrap text-[#bcbcbc] " +
            w +
            (i === 0 ? " bg-[#474747]" : " bg-[#2d2d2d]") +
            (i === 0 && italicFirst ? " italic" : "")
          }
        >
          <span className="pt-[3px]">{name}</span>
          <CloseMark />
        </button>
      ))}
      <div className="flex min-w-0 flex-1 items-center justify-between pr-0.5 pl-[6px]">
        <RoundButton kind="plus" />
        <div className="flex items-center gap-2">
          <MaxSquare />
          <RoundButton kind="down" />
        </div>
      </div>
    </div>
  );
}

function PathBar({ children }: { children: React.ReactNode }) {
  return (
    <div className="flex h-[36px] shrink-0 items-center border-t border-[#555] bg-gradient-to-b from-[#464646] to-[#373737] pl-2">
      <button type="button" aria-label="Back" className="flex">
        <Icon name="arrowleft" className="size-5" />
      </button>
      <button type="button" aria-label="Forward" className="ml-[10px] flex">
        <Icon name="arrowright" className="size-5" />
      </button>
      <div className="ml-3 flex h-[30px] min-w-0 flex-1 items-center border border-black bg-gradient-to-b from-[#474747] to-[#393939] pl-2 text-[15px] text-[#d4d4d4]">
        <Icon name="clapper" className="size-[22px]" />
        <span className="ml-1.5">obj</span>
        <svg viewBox="0 0 10 28" className="ml-2.5 h-7 w-2.5 shrink-0" aria-hidden="true">
          <path d="M1 1l7 13-7 13" fill="none" stroke="#8f8f8f" strokeWidth="2" />
        </svg>
        <Icon name="geo" className="ml-2 size-[22px]" />
        <span className="ml-2">Strange_Castle</span>
        <button type="button" aria-label="Path history" className="ml-auto flex h-full w-[26px] items-center justify-center border-t border-[#555] bg-[#2e2e2e]">
          <svg viewBox="0 0 10 8" className="h-2 w-2.5" aria-hidden="true">
            <path d="M0 0h10L5 8z" fill="#878787" />
          </svg>
        </button>
      </div>
      {children}
    </div>
  );
}

/* ------------------------------------------------------------------ */
/* Scene view                                                          */
/* ------------------------------------------------------------------ */

type Tool = { icon: string; on?: boolean; raised?: boolean; menu?: "right" | "down" };

const T = (icon: string, menu?: "right" | "down"): Tool => ({ icon, menu });

const LEFT_GROUPS: Tool[][] = [
  [T("move"), T("rotate"), T("scale"), T("axes", "right")],
  [T("magnetgrid", "right"), T("magnetcurve", "right"), T("magnetpoint", "right"), T("magnet", "right")],
  [{ icon: "viewtool", on: true }, T("flipbook"), T("lens", "right")],
];

const RIGHT_GROUPS: Tool[][] = [
  [T("flatdiamond"), T("camlock"), T("disc"), { icon: "headlight", on: true }, T("lights", "right"), T("goggles", "down")],
  [
    T("bluedot"),
    T("dumbbell"),
    T("brush"),
    T("pointnum"),
    T("primnormal"),
    T("primnum"),
    T("hull"),
    T("uv"),
    T("xyz"),
    T("abc"),
    T("marker", "down"),
    T("picture"),
  ],
  [{ icon: "quad", on: true }, T("eye")],
];

function ToolButton({ tool, height, size }: { tool: Tool; height: string; size: string }) {
  return (
    <button
      type="button"
      aria-label={tool.icon}
      className={
        "relative flex w-full shrink-0 items-center justify-center " +
        height +
        (tool.on ? " border border-[#7a5a14] bg-[#bd8a1e]" : tool.raised ? " border-b border-black bg-[#4a4a4a]" : "")
      }
    >
      <Icon name={tool.icon} className={size} />
      {tool.menu === "right" && <Tri side="right" />}
      {tool.menu === "down" && (
        <svg viewBox="0 0 10 5" className="absolute right-0 bottom-0 h-[5px] w-2.5" aria-hidden="true">
          <path d="M0 0h10L5 5z" fill="#8c8c8c" />
        </svg>
      )}
    </button>
  );
}

function GroupLine() {
  return <div className="my-[5px] h-px w-full shrink-0 bg-[#2a2a2a]" />;
}

function LeftToolbar() {
  return (
    <div className="flex w-9 shrink-0 flex-col border-l border-[#4a4a4a] bg-[#393939]">
      <div className="mb-1.5 h-[10px] shrink-0 border-t border-[#666] border-b border-b-black bg-[#444]">
        <svg viewBox="0 0 6 6" className="ml-0.5 size-2" aria-hidden="true">
          <path d="M5 0v6L0 3z" fill="#000" />
        </svg>
      </div>
      <div className="flex flex-col border-t border-black px-0.5">
        <ToolButton tool={{ icon: "cone", raised: true, menu: "right" }} height="h-[31px]" size="size-[22px]" />
        <ToolButton tool={{ icon: "diamond", on: true }} height="h-[31px]" size="size-[22px]" />
        <ToolButton tool={{ icon: "dice", raised: true, menu: "right" }} height="h-[31px]" size="size-[22px]" />
      </div>
      <div className="mt-1">
        <GroupLine />
      </div>
      <div className="flex flex-col px-0.5">
        <ToolButton tool={T("cursor", "right")} height="h-[34px]" size="size-[22px]" />
      </div>
      {LEFT_GROUPS.map((group, i) => (
        <div key={i} className="flex flex-col px-0.5">
          {i > 0 && <GroupLine />}
          {group.map((t) => (
            <ToolButton key={t.icon} tool={t} height="h-[34px]" size="size-[22px]" />
          ))}
        </div>
      ))}
      <div className="mt-auto flex flex-col px-0.5">
        <ToolButton tool={T("stack", "right")} height="h-[34px]" size="size-[22px]" />
        <ToolButton tool={T("reel", "right")} height="h-[34px]" size="size-[22px]" />
      </div>
    </div>
  );
}

function RightToolbar() {
  return (
    <div className="flex w-[35px] shrink-0 flex-col overflow-hidden bg-[#393939] pr-1 pl-1">
      <div className="mb-1 flex h-[10px] shrink-0 justify-end border-t border-[#666] border-b border-b-black bg-[#444]">
        <svg viewBox="0 0 6 6" className="size-2" aria-hidden="true">
          <path d="M0 0v6l5-3z" fill="#000" />
        </svg>
      </div>
      {RIGHT_GROUPS.map((group, i) => (
        <div key={i} className="flex flex-col">
          {i > 0 && <GroupLine />}
          {i > 1 && <div className="h-2.5" />}
          {group.map((t) => (
            <ToolButton key={t.icon} tool={t} height="h-8" size="size-5" />
          ))}
        </div>
      ))}
    </div>
  );
}

const GRID_A = Array.from({ length: 26 }, (_, n) => ({
  y1: 375 + 1 / (0.00212 + 0.00132 * n),
  y2: 375 + 1 / (0.00142 + 0.00091 * n),
}));

const GRID_B = Array.from({ length: 26 }, (_, i) => {
  const n = i - 1;
  return 348 + 1 / (0.00234 + 0.00105 * n);
});

function SceneDrawing() {
  return (
    <svg viewBox="40 211 702 701" preserveAspectRatio="xMidYMid slice" className="size-full" role="img" aria-label="Perspective viewport">
      <clipPath id="groundClip">
        <path d="M40 403l63-3 297 5 342 8v500H40z" />
      </clipPath>
      <rect x="40" y="211" width="702" height="701" fill="url(#gSky)" />
      <g clipPath="url(#groundClip)">
        <rect x="40" y="400" width="702" height="512" fill="url(#gGround)" />
        <g stroke="#6d6d6d" strokeWidth="1.500">
          {GRID_A.map((l, i) => (
            <line key={i} x1="40" y1={l.y1} x2="742" y2={l.y2} opacity={i < 8 ? 0.8 : 0.5} />
          ))}
          {GRID_B.map((y, i) => (
            <line key={i} x1="40" y1={y} x2="798" y2="348" opacity={i < 10 ? 0.8 : 0.3} />
          ))}
          <line x1="718" y1="912" x2="754" y2="570" opacity="0.8" />
        </g>
      </g>
      <g strokeWidth="1.300" stroke="#2c2c2c" fill="#949494" fillOpacity="0.6">
        <path d="M282 629L378 576 568 596 512 662z" />
        <path d="M476 487L515 475 610 475 683 487 660 502 543 502z" />
        <path d="M112 646L242 609 379 625 366 683 167 702z" fill="#878787" />
      </g>
      <path d="M498 585l54 8M504 590l46 6M510 595l37 4M517 600l26 3M436 609l12 2M446 616l14 2M452 622l18 2M460 628l20 2M468 634l20 2" stroke="#7c7c7c" />
      <g stroke="#f06464" strokeWidth="2" fill="none">
        <path d="M435 466L434 611 576 628M434 611L378 652" />
      </g>
      <g fill="#f06464" fontFamily="DejaVu Sans" fontSize="15">
        <text x="434" y="472">y</text>
        <text x="575" y="630">x</text>
        <text x="374" y="656">z</text>
      </g>
      <path d="M306 345h6v4l2 2-1 7h-7l-1-6 2-3z" fill="#6e6e6e" />
      <g strokeWidth="2.500" fill="none">
        <path d="M69 882V858" stroke="#22cc22" />
        <path d="M69 882l22 2" stroke="#dd2222" strokeWidth="1.600" />
        <path d="M69 882l-7 3" stroke="#1a1ad0" />
      </g>
      <g fontFamily="DejaVu Sans" fontSize="15" fontWeight="bold">
        <text x="67" y="862" fill="#22cc22">y</text>
        <text x="91" y="887" fill="#dd2222" fontWeight="normal">x</text>
        <text x="57" y="889" fill="#1a1ad0">z</text>
      </g>
    </svg>
  );
}

function ViewTag({ text }: { text: string }) {
  return (
    <button type="button" className="flex h-[21px] items-center gap-0.5 border-2 border-[#e3e35c] px-1 text-[15px] leading-none text-[#e8e840]">
      {text}
      <svg viewBox="0 0 8 5" className="mt-1 h-[5px] w-2" aria-hidden="true">
        <path d="M0 0h8L4 5z" fill="#e8e840" />
      </svg>
    </button>
  );
}

const LEFT_PANE_TABS: ShelfTab[] = [
  ["Scene View", "w-[118px]"],
  ["Channel Ed...", "w-[120px]"],
  ["Render View", "w-[119px]"],
  ["Composite...", "w-[122px]"],
  ["Motion View", "w-[114px]"],
  ["Details View", "w-[114px]"],
];

function ScenePane() {
  return (
    <section className="flex min-h-0 min-w-0 flex-col overflow-hidden bg-black">
      <PaneTabs tabs={LEFT_PANE_TABS} />
      <PathBar>
        <div className="mr-2 ml-3 flex items-center gap-3">
          <IconButton name="pin" label="Pin" />
          <IconButton name="target" label="Link" />
          <div className="ml-2 flex items-center gap-3.5">
            <IconButton name="glasscube" label="Display" menu />
            <IconButton name="cylball" label="Render" menu />
            <IconButton name="whitesquare" label="Color" menu size="size-[22px]" />
          </div>
        </div>
      </PathBar>
      <div className="mt-px flex h-[36px] shrink-0 gap-0.5">
        <Grip />
        <div className="flex min-w-0 flex-1 items-center border-t border-[#666] bg-[#2e2e2e] pt-px pr-2 pl-2">
          <IconButton name="camera" label="View tool" menu size="size-[22px]" />
          <h2 className="ml-2 text-[15px] font-bold text-[#cfcfcf]">View</h2>
          <div className="ml-auto flex items-center gap-3">
            <IconButton name="stamps" label="Handles" menu size="size-[22px]" />
            <IconButton name="help" label="Help" />
          </div>
        </div>
      </div>
      <div className="mt-0.5 flex min-h-0 flex-1">
        <LeftToolbar />
        <div className="relative ml-0.5 min-w-0 flex-1 overflow-hidden bg-[#858585]">
          <SceneDrawing />
          <div className="absolute top-2 right-3 flex gap-1.5">
            <ViewTag text="persp1" />
            <ViewTag text="no cam" />
          </div>
        </div>
        <RightToolbar />
      </div>
    </section>
  );
}

/* ------------------------------------------------------------------ */
/* Parameters                                                          */
/* ------------------------------------------------------------------ */

function ParamCheck({ label, checked }: { label: string; checked?: boolean }) {
  return (
    <label className="flex h-[27px] items-center gap-2.5 text-[15px] text-[#c4c4c4]">
      <span className="relative flex size-[19px]">
        <input type="checkbox" defaultChecked={checked} className="size-full appearance-none border-2 border-[#2c2c2c] bg-[#101010]" />
        {checked && (
          <svg viewBox="0 0 18 18" className="pointer-events-none absolute inset-0 size-full" aria-hidden="true">
            <path d="M3 9l4-1 2 3 6-10 3 0L10 16 7 16z" fill="#d8d8d8" />
          </svg>
        )}
      </span>
      {label}
    </label>
  );
}

function ParameterPane() {
  return (
    <section className="flex h-[253px] shrink-0 flex-col bg-black pl-0.5">
      <PaneTabs
        italicFirst
        tabs={[
          ["4_Castle", "w-[109px]"],
          ["Take List", "w-[113px]"],
          ["Performance Monitor", "w-[190px]"],
        ]}
      />
      <PathBar>
        <div className="mr-2 ml-3 flex items-center gap-2.5">
          <IconButton name="pin" label="Pin" />
          <IconButton name="target" label="Link" />
        </div>
      </PathBar>
      <div className="mt-px flex h-[36px] shrink-0 items-center bg-[#3a3a3a] pt-px pr-2 pl-2">
        <IconButton name="ring" label="Operator" menu />
        <label htmlFor="node-name" className="ml-2 text-[15px] font-bold text-[#cfcfcf]">
          Null
        </label>
        <input
          id="node-name"
          defaultValue="4_Castle"
          className="ml-1.5 h-[25px] min-w-0 flex-1 border border-[#242424] bg-[#111] px-1 font-['DejaVu_Sans_Mono',monospace] text-base text-[#d8d8d8]"
        />
        <div className="ml-2 flex items-center gap-3.5">
          <IconButton name="gear" label="Settings" menu />
          <IconButton name="hicon" label="Houdini" menu />
          <IconButton name="info" label="Info" />
          <IconButton name="help" label="Help" />
        </div>
      </div>
      <div className="mt-px flex min-h-0 flex-1 flex-col bg-[#393939] pt-0.5 pl-[17%]">
        <ParamCheck label="Copy Input" checked />
        <ParamCheck label="Cache Input" />
      </div>
    </section>
  );
}

/* ------------------------------------------------------------------ */
/* Network editor                                                      */
/* ------------------------------------------------------------------ */

type NodeKind = "plain" | "ssc" | "purple";
type NetNode = {
  label: string;
  x: number;
  y: number;
  kind?: NodeKind;
  glyph: "circle" | "reverse" | "xform" | "grid" | "edit" | "merge" | "box" | "null";
  inputs?: number;
  state?: "edited" | "current";
};

const NODES: NetNode[] = [
  { label: "xform6", x: -69, y: 104, glyph: "xform", inputs: 1 },
  { label: "xform7", x: 86, y: 89, glyph: "xform", inputs: 1 },
  { label: "SSC_Parameters16", x: -69, y: 153, glyph: "box", kind: "ssc", inputs: 4 },
  { label: "SSC_Parameters17", x: 86, y: 162, glyph: "box", kind: "ssc", inputs: 4 },
  { label: "circle1", x: 284, y: 25, glyph: "circle" },
  { label: "reverse1", x: 284, y: 77, glyph: "reverse", inputs: 1 },
  { label: "xform1", x: 284, y: 130, glyph: "xform", inputs: 1 },
  { label: "SSC_Parameters18", x: 284, y: 196, glyph: "box", kind: "ssc", inputs: 4 },
  { label: "grid1", x: 429, y: 38, glyph: "grid" },
  { label: "edit1", x: 429, y: 109, glyph: "edit", inputs: 2, state: "edited" },
  { label: "SSC_Parameters19", x: 429, y: 183, glyph: "box", kind: "ssc", inputs: 4 },
  { label: "circle2", x: 558, y: 28, glyph: "circle" },
  { label: "reverse2", x: 558, y: 77, glyph: "reverse", inputs: 1 },
  { label: "xform2", x: 558, y: 125, glyph: "xform", inputs: 1 },
  { label: "SSC_Parameters20", x: 558, y: 198, glyph: "box", kind: "ssc", inputs: 4 },
  { label: "SSC_Parameters21", x: 679, y: 167, glyph: "box", kind: "ssc", inputs: 4 },
  { label: "circle3", x: 801, y: 31, glyph: "circle" },
  { label: "reverse3", x: 801, y: 80, glyph: "reverse", inputs: 1 },
  { label: "xform3", x: 801, y: 128, glyph: "xform", inputs: 1 },
  { label: "SSC_Parameters23", x: 801, y: 218, glyph: "box", kind: "ssc", inputs: 4 },
  { label: "SSC_Parame", x: 629, y: 295, glyph: "box", kind: "ssc", inputs: 4 },
  { label: "merge1", x: 429, y: 295, glyph: "merge", inputs: 1 },
  { label: "merge4", x: 797, y: 295, glyph: "merge", inputs: 1 },
  { label: "grid", x: 1023, y: 126, glyph: "grid" },
  { label: "xfor", x: 1023, y: 185, glyph: "xform", inputs: 1 },
  { label: "SSC", x: 1023, y: 248, glyph: "box", kind: "ssc", inputs: 4 },
  { label: "4_Castle", x: 429, y: 374, glyph: "null", kind: "purple", inputs: 1, state: "current" },
  { label: "5_Castle", x: 797, y: 374, glyph: "null", kind: "purple", inputs: 1 },
];

const INPUT_SLOTS: Record<number, number[]> = { 1: [30], 2: [10, 51], 4: [0, 21, 41, 61] };

function Glyph({ glyph }: { glyph: NetNode["glyph"] }) {
  return (
    <svg viewBox="0 0 16 16" className="size-4" aria-hidden="true">
      {glyph === "circle" && <circle cx="8" cy="8" r="5.500" fill="#b0b3b8" stroke="#868a90" strokeWidth="2.500" />}
      {glyph === "null" && (
        <g>
          <circle cx="8" cy="8" r="5" fill="none" stroke="#b9a8cc" strokeWidth="2.500" />
          <circle cx="8" cy="8" r="2.500" fill="#5b3a7c" />
        </g>
      )}
      {glyph === "reverse" && (
        <g>
          <rect x="1.500" y="2" width="13" height="12" rx="3" fill="#cbb799" stroke="#8a8378" />
          <path d="M4 6h7v3H5M11 11l-3-2" stroke="#c07a34" fill="none" strokeWidth="1.800" />
        </g>
      )}
      {glyph === "xform" && (
        <g>
          <path d="M3 8c0-4 3-6 6-6s5 2 5 5v6h-4V9H7v3z" fill="#7d9cc2" />
          <path d="M1 9h6v5H1zM10 8h5v6h-5z" fill="#5f80a8" />
        </g>
      )}
      {glyph === "grid" && <path d="M3 11l2-5h6l3 5zM3 12h11" fill="#c9ced6" stroke="#858d99" />}
      {glyph === "edit" && (
        <g>
          <path d="M2 5l6-3 6 2-1 5-4 5-6-2z" fill="#9aa3ad" stroke="#7d8690" />
          <path d="M9 6l5-2v3l-4 2z" fill="#c9d0d8" />
        </g>
      )}
      {glyph === "merge" && (
        <g stroke="#a8969a" strokeWidth="1.800" fill="none">
          <path d="M4 2l6 4 1 4-3 4M11 8l3 3M2 10l4 1 2 3" />
        </g>
      )}
      {glyph === "box" && (
        <g>
          <path d="M3 6h10l-1 7H4z" fill="#e0a050" />
          <path d="M2 3h12v4H2z" fill="#c98630" />
          <path d="M5 8h6M5 5h6" stroke="#f0c080" />
        </g>
      )}
    </svg>
  );
}

function Cell({ className }: { className: string }) {
  return <span className={"h-full w-[9px] " + className} />;
}

function NodeBody({ node }: { node: NetNode }) {
  const kind = node.kind ?? "plain";
  const fill = kind === "ssc" ? "bg-[#bd951f]" : kind === "purple" ? "bg-[#6b4392]" : "bg-[#bdbdbd]";
  const gap = kind === "ssc" ? "bg-[#6d5510]" : kind === "purple" ? "bg-[#41265e]" : "bg-[#6a6a6a]";
  return (
    <button type="button" aria-label={node.label} className="absolute h-5 w-[79px]" style={{ left: node.x, top: node.y }}>
      {(INPUT_SLOTS[node.inputs ?? 0] ?? []).map((slot) => (
        <span key={slot} className="absolute -top-[7px] h-[5px] w-[18px] rounded-tr-sm bg-[#8b8b8b]" style={{ left: slot }} />
      ))}
      <span className={"flex size-full gap-px " + gap}>
        <Cell className={node.state === "edited" ? "bg-[#ffff00]" : fill} />
        <Cell className={fill} />
        <span className={"flex h-full flex-1 items-center justify-center " + (kind === "plain" ? "bg-[#b4b4b4]" : fill)}>
          <Glyph glyph={node.glyph} />
        </span>
        <Cell className={fill} />
        <Cell className={node.state === "current" ? "bg-[#00b2f2]" : fill} />
      </span>
      <span className="absolute top-[22px] left-[30px] h-[5px] w-[18px] rounded-tr-sm bg-[#8b8b8b]" />
    </button>
  );
}

function Wires() {
  return (
    <svg viewBox="786 473 1134 440" className="absolute top-0 left-0 h-[440px] w-[1134px]" aria-hidden="true">
      <circle cx="1254" cy="856" r="59" fill="#456885" />
      <circle cx="1254" cy="856" r="43" fill="#634d7b" />
      <g fill="none" stroke="#878787" strokeWidth="1.700">
        <path d="M786 533C840 529 890 535 910 557" />
        <path d="M910 588L881 628M911 662C895 692 850 694 786 694" />
        <path d="M1108 525v20M1108 577v20M1108 629L1079 664" />
        <path d="M1112 629C1126 655 1150 668 1246 691C1330 706 1470 722 1547 737C1580 744 1606 752 1617 762" />
        <path d="M1108 697C1116 712 1128 719 1160 725C1220 738 1234 741 1246 761" />
        <path d="M1253 537L1234 576M1253 609L1225 650M1249 693L1253 761" />
        <path d="M1258 683C1275 700 1330 710 1365 722C1395 733 1412 744 1423 762" />
        <path d="M1248 691C1290 701 1330 709 1360 720" />
        <path d="M1382 528v16M1382 577v15M1382 625L1352 665M1385 626C1398 629 1440 628 1473 633" />
        <path d="M1382 697C1374 718 1360 720 1320 730C1280 739 1270 742 1260 761" />
        <path d="M1625 531v16M1625 580v15M1625 628L1597 686M1626 719L1627 761" />
        <path d="M1503 666C1510 684 1520 695 1550 708C1596 732 1614 736 1622 761" />
        <path d="M1453 796C1466 806 1486 806 1508 794C1545 770 1560 753 1590 753C1604 753 1610 757 1618 762" />
        <path d="M1621 794v48" />
        <path d="M1844 626L1848 653M1850 625C1865 636 1890 637 1920 628M1848 684L1819 715M1849 747C1862 760 1885 760 1920 761" />
        <path d="M1621 874C1600 893 1500 905 1359 912M1680 912L1920 895" strokeDasharray="6 6" />
      </g>
      <path d="M1253 794v48M1253 874C1244 893 1150 903 1069 913" fill="none" stroke="#8a7836" strokeWidth="1.700" />
      <path d="M1407 713l15 7-15 6zM1242 696h12l-4-9h-4z" fill="#9a9a9a" />
      <path d="M1212 843h30v-5h23v5h32v28h-32v5h-23v-5h-30z" fill="none" stroke="#edbb3a" strokeWidth="3" />
    </svg>
  );
}

function NetworkCanvas() {
  return (
    <div className="relative min-h-0 flex-1 overflow-hidden bg-[#2e2e2e]">
      <span className="absolute top-2.5 right-2.5 text-xl leading-7 font-bold text-[#414141]">Geometry</span>
      <Wires />
      {NODES.map((n) => (
        <NodeBody key={n.label} node={n} />
      ))}
      {NODES.map((n) => (
        <span
          key={n.label}
          className={
            "pointer-events-none absolute text-[13px] leading-5 whitespace-nowrap " +
            (n.kind === "ssc" ? "text-[#a39bd4]" : "text-[#bebebe]")
          }
          style={{ left: n.x + 84, top: n.y + 1 }}
        >
          {n.label}
        </span>
      ))}
    </div>
  );
}

function NetworkPane() {
  return (
    <section className="flex min-h-0 flex-1 flex-col bg-black">
      <div className="flex flex-col pl-0.5">
        <PaneTabs
          italicFirst
          tabs={[
            ["/obj/Strange_Castle", "w-[183px]"],
            ["Tree View", "w-[118px]"],
            ["Material Palette", "w-[162px]"],
            ["Asset Browser", "w-[147px]"],
          ]}
        />
        <PathBar>
          <div className="mr-2 ml-3 flex items-center gap-2.5">
            <IconButton name="pin" label="Pin" />
            <IconButton name="target" label="Link" />
            <div className="ml-3.5 flex">
              <IconButton name="gear" label="Settings" menu />
            </div>
          </div>
        </PathBar>
      </div>
      <div className="mt-0.5 flex h-[38px] shrink-0 gap-0.5 pl-0.5">
        <Grip />
        <div className="flex min-w-0 flex-1 items-center justify-between border-t border-[#666] bg-[#2e2e2e] px-2.5">
          <div className="flex items-center gap-[11px]">
            <IconButton name="tree" label="Tree" />
            <IconButton name="list" label="List" />
            <IconButton name="layers" label="Layers" />
            <IconButton name="palette" label="Palette" />
            <div className="ml-3 flex items-center gap-[11px]">
              <IconButton name="netbox" label="Network box" />
              <IconButton name="note" label="Sticky note" />
              <IconButton name="basket" label="Subnet" />
            </div>
          </div>
          <div className="flex items-center gap-[11px]">
            <IconButton name="alignv" label="Align vertically" />
            <IconButton name="alignh" label="Align horizontally" />
            <IconButton name="snapv" label="Snap vertical" />
            <IconButton name="snaph" label="Snap horizontal" />
            <IconButton name="snapgrid" label="Snap to grid" />
            <IconButton name="gridblue" label="Show grid" />
            <div className="ml-3 flex items-center gap-[11px]">
              <IconButton name="search" label="Find" />
              <IconButton name="eye" label="Display options" />
            </div>
          </div>
        </div>
      </div>
      <div className="mt-px flex min-h-0 flex-1">
        <NetworkCanvas />
      </div>
    </section>
  );
}

/* ------------------------------------------------------------------ */
/* Playbar                                                             */
/* ------------------------------------------------------------------ */

const PLAY_BUTTONS: { label: string; on?: boolean; art: React.ReactNode }[] = [
  { label: "First frame", art: <path d="M0 3h3v12H0zM13 3v12L4 9zM22 3v12l-8-6z" fill="#dcdcdc" /> },
  {
    label: "Previous key",
    art: (
      <g>
        <path d="M4 3h3v12H4z" fill="#62b838" />
        <path d="M18 4v10L9 9z" fill="#dcdcdc" />
      </g>
    ),
  },
  { label: "Play backward", art: <path d="M17 2v14L5 9z" fill="#dcdcdc" /> },
  { label: "Stop", on: true, art: <path d="M3 1h16v16H3z" fill="#e8e8e0" /> },
  { label: "Play", art: <path d="M5 2v14l12-7z" fill="#dcdcdc" /> },
  {
    label: "Next key",
    art: (
      <g>
        <path d="M15 3h3v12h-3z" fill="#62b838" />
        <path d="M4 4v10l9-5z" fill="#dcdcdc" />
      </g>
    ),
  },
];

const TICKS = Array.from({ length: 39 }, (_, i) => (i + 1) * 6).concat(240);

function Dots({ className }: { className?: string }) {
  return (
    <svg viewBox="0 0 14 4" className={className ?? "h-1 w-3.5"} aria-hidden="true">
      <path d="M0 4l2-4h1v4zM5 4l2-4h1v4zM10 4l2-4h1v4z" fill="#000" />
    </svg>
  );
}

const fieldClass =
  "h-[26px] border border-[#242424] bg-[#0e0e0e] pl-1 font-['DejaVu_Sans_Mono',monospace] text-base text-[#d8d8d8]";

function PlayBar() {
  return (
    <footer className="mt-0.5 flex h-[58px] shrink-0 gap-0.5 bg-black pl-0.5">
      <Grip down />
      <div className="flex min-w-0 flex-1 border-t border-[#777] bg-[#2d2d2d] pl-[7px]">
        <div className="mt-3 flex h-[33px] gap-0.5">
          {PLAY_BUTTONS.map((b) => (
            <button
              key={b.label}
              type="button"
              aria-label={b.label}
              className={
                "flex w-8 items-center justify-center border " +
                (b.on ? "border-[#8a661a] bg-[#bd8a1e]" : "border-t-[#777] border-r-black border-b-black border-l-[#555] bg-[#404040]")
              }
            >
              <svg viewBox="0 0 22 18" className="h-[18px] w-[22px]" aria-hidden="true">
                {b.art}
              </svg>
            </button>
          ))}
        </div>
        <div className="mt-4 ml-3 flex h-[26px]">
          <input aria-label="Current frame" defaultValue="1" className={fieldClass + " w-[70px]"} />
          <button type="button" aria-label="Decrease" className="flex w-6 items-center justify-center border border-black border-t-[#777] bg-[#424242]">
            <svg viewBox="0 0 14 14" className="size-3.5" aria-hidden="true">
              <path d="M2 5h10v4H2z" fill="#555" stroke="#b4b4b4" />
            </svg>
          </button>
          <button type="button" aria-label="Increase" className="flex w-6 items-center justify-center border border-black border-t-[#777] bg-[#424242]">
            <svg viewBox="0 0 14 14" className="size-3.5" aria-hidden="true">
              <path d="M5 2h4v3h3v4H9v3H5V9H2V5h3z" fill="#555" stroke="#b4b4b4" />
            </svg>
          </button>
        </div>
        <input aria-label="Start frame" defaultValue="1" className={fieldClass + " mt-4 ml-2.5 w-[58px]"} />
        <div className="ml-1 flex min-w-0 flex-1 flex-col">
          <div className="relative h-[45px] overflow-hidden border-t border-r-2 border-l-2 border-[#c4c4c4] bg-[#282828]">
            <div className="absolute top-[21px] right-0 left-0 h-0.5 bg-[#b9b9b9]" />
            {TICKS.map((f) => (
              <div
                key={f}
                className={
                  "absolute w-0.5 " + (f % 24 === 0 ? "top-[15px] h-[13px] bg-[#d8d8d8]" : "top-[17px] h-[9px] bg-[#909090]")
                }
                style={{ left: `${((f - 1) / 239.5) * 100}%` }}
              />
            ))}
            {TICKS.filter((f) => f % 24 === 0).map((f) => (
              <span
                key={f}
                className="absolute top-px pl-0.5 text-[13px] leading-4 text-[#bdbdbd]"
                style={{ left: `${((f - 1) / 239.5) * 100}%` }}
              >
                {f}
              </span>
            ))}
            <div className="absolute -top-px -left-0.5 flex h-7 w-7 items-center justify-center border-2 border-[#e8e8e8] bg-black text-base text-white">
              1
            </div>
          </div>
          <div className="flex h-[10px] border-t border-[#5a5a5a] bg-[#3e3e3e]">
            <div className="flex w-[27px] items-center justify-center border-r border-black">
              <Dots />
            </div>
            <div className="flex flex-1 items-center justify-center">
              <Dots />
            </div>
            <div className="flex w-[27px] items-center justify-center border-l border-black">
              <Dots />
            </div>
          </div>
        </div>
        <input aria-label="End frame" defaultValue="240" className={fieldClass + " mt-4 ml-1.5 w-[58px]"} />
        <div className="mt-[13px] mr-1.5 ml-3 flex h-[30px]">
          {["key", "clock", "sweep", "speaker", "pointer"].map((n, i) => (
            <button
              key={n}
              type="button"
              aria-label={n}
              className={
                "flex w-[29px] items-center justify-center border border-t-[#777] border-r-black border-b-black border-l-[#555] bg-[#404040]" +
                (i === 0 ? " mr-[5px]" : " mr-px")
              }
            >
              <Icon name={n} className="size-5" />
            </button>
          ))}
        </div>
      </div>
    </footer>
  );
}

function StatusBar() {
  return (
    <div className="mt-0.5 flex h-[31px] shrink-0 bg-gradient-to-b from-[#1c1c1c] to-[#131313] pl-1">
      <p className="min-w-0 flex-1 truncate pt-px text-[15px] leading-[31px] text-[#b9b9b9]">
        Left mouse tumbles. Middle pans. Right dollies. Ctrl+Alt+Left box-zooms. Ctrl+Right zooms. Spacebar-Ctrl-Left tilts.
      </p>
      <div className="flex items-stretch gap-0.5 bg-[#222] pr-0.5">
        <div className="flex w-[29px] items-center justify-center bg-[#333]">
          <IconButton name="errorx" label="Errors" size="size-[18px]" />
        </div>
        <div className="flex w-[29px] items-center justify-center bg-[#333]">
          <IconButton name="brain" label="Cook" size="size-[22px]" />
        </div>
        <div className="flex w-[29px] items-center justify-center bg-[#333]">
          <IconButton name="recook" label="Recook" size="size-[22px]" />
        </div>
        <select
          aria-label="Update mode"
          className="w-[130px] appearance-none border-t border-[#666] bg-gradient-to-b from-[#474747] to-[#3b3b3b] pl-4 text-[15px] text-[#c4c4c4]"
        >
          <option>Auto Update</option>
        </select>
        <div className="flex w-[27px] items-center justify-center bg-[#2a2a2a]">
          <Spinner />
        </div>
        <div className="flex w-[27px] items-center justify-center bg-[#333]">
          <IconButton name="drum" label="Cache" size="size-[22px]" />
        </div>
      </div>
    </div>
  );
}

/* ------------------------------------------------------------------ */
/* Page                                                                */
/* ------------------------------------------------------------------ */

export default function App() {
  return (
    <div className="flex h-screen w-full flex-col overflow-hidden bg-black font-['DejaVu_Sans',sans-serif]">
      <Defs />
      <div className="h-[3px] shrink-0 bg-[#54432a]" />
      <MenuBar />
      <Shelves />
      <main className="mt-0.5 grid min-h-0 flex-1 grid-cols-[776fr_8px_1134fr] pl-0.5">
        <ScenePane />
        <div className="mx-0.5 flex flex-col items-center border-l border-[#666] bg-[#454545]">
          <svg viewBox="0 0 5 70" className="mt-[364px] h-[70px] w-[5px]" aria-hidden="true">
            <path d="M5 0v8L0 4zM0 62v8l5-4z" fill="#9a9a9a" />
            <path d="M1 24v22M4 24v22" stroke="#a0a0a0" strokeDasharray="1 2" />
          </svg>
        </div>
        <div className="flex min-h-0 min-w-0 flex-col overflow-hidden">
          <ParameterPane />
          <div className="flex h-[7px] shrink-0 items-center justify-center border-t border-[#6e6e6e] bg-[#444]">
            <svg viewBox="0 0 70 6" className="h-1.5 w-[70px]" aria-hidden="true">
              <path d="M0 5h8L4 0zM62 0h8l-4 5z" fill="#9a9a9a" />
              <path d="M26 1h20M26 4h20" stroke="#a0a0a0" strokeDasharray="2 2" />
            </svg>
          </div>
          <NetworkPane />
        </div>
      </main>
      <PlayBar />
      <StatusBar />
    </div>
  );
}
